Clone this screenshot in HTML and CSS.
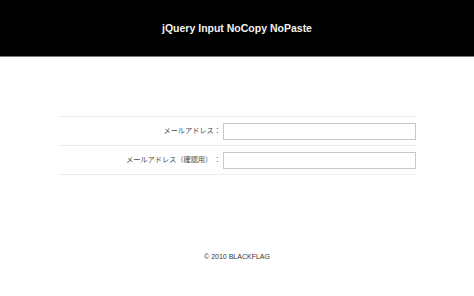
FILE: index.html
```html
<!DOCTYPE html>
<html lang="ja">
<head>
<meta charset="utf-8">
<title>jQuery Input NoCopy NoPaste</title>
<link rel="stylesheet" href="styles.css">
</head>
<body>
<header class="site-header">
  <h1 class="site-title">jQuery Input NoCopy NoPaste</h1>
</header>
<main class="content">
  <form class="form">
    <div class="form-row">
      <label class="form-label" for="mail">メールアドレス：</label>
      <input class="form-input" id="mail" type="text">
    </div>
    <div class="form-row">
      <label class="form-label" for="mail2">メールアドレス（確認用） ：</label>
      <input class="form-input" id="mail2" type="text">
    </div>
  </form>
</main>
<footer class="site-footer">© 2010 BLACKFLAG</footer>
</body>
</html>
```
FILE: styles.css
```css
html, body {
  margin: 0;
  padding: 0;
  background: #ffffff;
}
body {
  font-family: "Liberation Sans", Arial, "Noto Sans CJK JP", sans-serif;
  color: #333;
}
.site-header {
  height: 56px;
  background: #000;
  border-bottom: 1px solid #7a7a7a;
  display: flex;
  align-items: center;
  justify-content: center;
}
.site-title {
  margin: 0;
  font-size: 10.5px;
  font-weight: bold;
  color: #f2f2f2;
  line-height: 1;
}
.content {
  padding-top: 59px;
  display: flex;
  justify-content: center;
}
.form {
  width: 358px;
  border-bottom: 1px solid #ececec;
}
.form-row {
  display: grid;
  grid-template-columns: 165px 193px;
  align-items: center;
  height: 28px;
  border-top: 1px solid #ececec;
}
.form-label {
  font-family: "Noto Sans CJK JP", sans-serif;
  font-size: 7.2px;
  color: #4a4a4a;
  text-align: right;
  padding-right: 2px;
  line-height: 1;
  white-space: pre;
}
.form-input {
  box-sizing: border-box;
  width: 193px;
  height: 17px;
  margin: 0;
  padding: 0 2px;
  border: 1px solid #c8c8c8;
  background: #fff;
  outline: none;
}
.site-footer {
  margin-top: 77px;
  text-align: center;
  font-size: 7px;
  line-height: 9px;
  color: #333;
}
```
